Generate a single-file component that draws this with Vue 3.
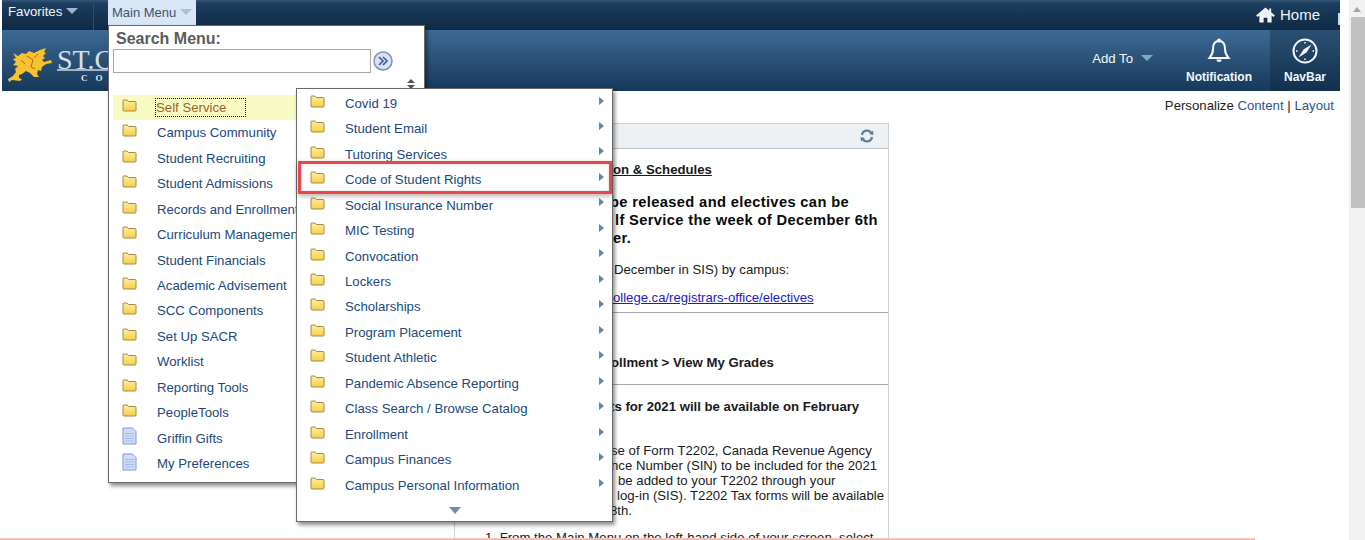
<script setup>
const mainItems = [
  ['Self Service', 'folder', true], ['Campus Community', 'folder'], ['Student Recruiting', 'folder'],
  ['Student Admissions', 'folder'], ['Records and Enrollment', 'folder'], ['Curriculum Management', 'folder'],
  ['Student Financials', 'folder'], ['Academic Advisement', 'folder'], ['SCC Components', 'folder'],
  ['Set Up SACR', 'folder'], ['Worklist', 'folder'], ['Reporting Tools', 'folder'], ['PeopleTools', 'folder'],
  ['Griffin Gifts', 'doc'], ['My Preferences', 'doc']
]
const subItems = ['Covid 19', 'Student Email', 'Tutoring Services', 'Code of Student Rights', 'Social Insurance Number',
  'MIC Testing', 'Convocation', 'Lockers', 'Scholarships', 'Program Placement', 'Student Athletic',
  'Pandemic Absence Reporting', 'Class Search / Browse Catalog', 'Enrollment', 'Campus Finances', 'Campus Personal Information']
const lines = [
  { t: 'on & Schedules', x: 158, y: 169, c: 'u b' },
  { t: 'be released and electives can be', x: 155, y: 202, c: 'big' },
  { t: 'lf Service the week of December 6th', x: 160, y: 220, c: 'big' },
  { t: 'er.', x: 158, y: 238, c: 'big' },
  { t: 'December in SIS) by campus:', x: 159, y: 269, c: '' },
  { t: 'ollege.ca/registrars-office/electives', x: 158, y: 297, c: 'link' },
  { t: 'ollment > View My Grades', x: 156, y: 362, c: 'b' },
  { t: 'ts for 2021 will be available on February', x: 155, y: 406, c: 'b' },
  { t: 'se of Form T2202, Canada Revenue Agency', x: 156, y: 450, c: '' },
  { t: 'nce Number (SIN) to be included for the 2021', x: 156, y: 465, c: '' },
  { t: 'be added to your T2202 through your', x: 163, y: 480, c: '' },
  { t: 'log-in (SIS). T2202 Tax forms will be available', x: 162, y: 495, c: '' },
  { t: '8th.', x: 155, y: 510, c: '' },
  { t: '1. From the Main Menu on the left-hand side of your screen, select', x: 30, y: 537, c: '' }
]
</script>

<template>
  <div class="page">
    <header class="hdr">
      <div class="bar1">
        <span class="fav">Favorites<i class="tri light"></i></span>
        <span class="sep"></span>
        <span class="mm">Main Menu<i class="tri pale"></i></span>
        <span class="home">
          <svg width="19" height="16" viewBox="0 0 20 17"><path d="M10 0.500 L0 9 L1.500 10.500 L3.500 9 V16.500 H8 V11.500 H12 V16.500 H16.500 V9 L18.500 10.500 L20 9 L16 5.600 V1.500 H14 V3.900 Z" fill="#eef3f7"/></svg>
          Home
        </span>
        <span class="tick"></span>
      </div>
      <div class="bar2">
        <div class="logo">
          <svg class="griffin" width="44" height="36" viewBox="0 0 44 36"><path d="M5 6 L10 9 L14 6 L18 7 L21 4 L26 6 L32 3 L38 1 L36 5 L38 6 L35 9 L37 11 L34 13 L36 15 L43 13 L44 16 L38 17 L34 20 L33 24 L30 23 L29 27 L31 30 L26 30 L22 26 L18 24 L14 27 L11 28 L11 31 L14 32 L12 34 L4 33 L1 35 L0 32 L5 29 L8 25 L7 22 L10 19 L5 18 L8 15 L5 12 L8 11 Z" fill="#f8c12f"/><path d="M19 9 L25 13 L23 20 L27 22 M13 13 L17 17 M30 7 L26 11" stroke="#9a7416" fill="none"/></svg>
          <div class="wordmark">
            <div class="st">ST.C</div>
            <div class="col">COL</div>
          </div>
        </div>
        <div class="right">
          <span class="addto">Add To<i class="tri blue"></i></span>
          <div class="tool">
            <svg width="24" height="26" viewBox="0 0 24 26" fill="none" stroke="#f4f7fa" stroke-width="2"><path d="M12 3 C7 3 6 7 6 11 C6 15 5 17 2.500 20 H21.500 C19 17 18 15 18 11 C18 7 17 3 12 3 Z"/><circle cx="12" cy="2.500" r="1" fill="#f4f7fa"/><path d="M9.500 21.500 a2.500 2.500 0 0 0 5 0" fill="#f4f7fa" stroke="none"/></svg>
            <span>Notification</span>
          </div>
          <div class="tool nav">
            <svg width="26" height="26" viewBox="0 0 26 26" fill="none" stroke="#f4f7fa" stroke-width="2"><circle cx="13" cy="13" r="11.500"/><path d="M19.500 6.500 L14.500 14.500 L11.500 11.500 Z M6.500 19.500 L11.500 11.500 L14.500 14.500 Z" fill="#f4f7fa" stroke="none"/><path d="M13 4 v1.500 M13 20.500 v1.500 M4 13 h1.500 M20.500 13 h1.500" stroke-width="1.500"/></svg>
            <span>NavBar</span>
          </div>
        </div>
      </div>
    </header>

    <div class="persona">Personalize <a>Content</a> | <a>Layout</a></div>

    <section class="panel">
      <div class="phead">
        <svg width="14" height="14" viewBox="0 0 14 14" fill="none" stroke="#5f7f9c" stroke-width="2.200"><path d="M2 6 A5 5 0 0 1 11.500 4.500"/><path d="M12 8 A5 5 0 0 1 2.500 9.500"/><path d="M9 5 L13.500 6 L13 1.500 Z M5 9 L0.500 8 L1 12.500 Z" fill="#5f7f9c" stroke="none"/></svg>
      </div>
      <div class="pbody">
        <span v-for="l in lines" :key="l.t" class="ln" :class="l.c" :style="{ left: l.x + 'px', top: (l.y - 148) + 'px' }">{{ l.t }}</span>
        <hr class="rule r1" />
        <hr class="rule r2" />
      </div>
    </section>

    <div class="pink"></div>

    <div class="menu main">
      <div class="stitle">Search Menu:</div>
      <div class="srow">
        <span class="sinput"></span>
        <svg width="20" height="20" viewBox="0 0 20 20"><circle cx="10" cy="10" r="9" fill="#d8e2f2" stroke="#7d93bd" stroke-width="1.500"/><path d="M6 6 L10 10 L6 14 M10 6 L14 10 L10 14" fill="none" stroke="#3d5f9e" stroke-width="1.700"/></svg>
      </div>
      <div class="sort"><i class="up"></i><i class="dn"></i></div>
      <ul class="list">
        <li v-for="m in mainItems" :key="m[0]" class="row" :class="{ hi: m[2] }">
          <svg v-if="m[1] === 'folder'" class="ic" width="15" height="13" viewBox="0 0 15 13"><defs><linearGradient id="fold" x1="0" y1="0" x2="0" y2="1"><stop offset="0" stop-color="#fdeea0"/><stop offset="1" stop-color="#f7d048"/></linearGradient></defs><path d="M1 3 V1.500 Q1 1 1.500 1 H5 L6.500 2.500 H13 Q14 2.500 14 3.500 V11 Q14 12 13 12 H2 Q1 12 1 11 Z" fill="url(#fold)" stroke="#a38a48"/></svg>
          <svg v-else class="ic" width="15" height="18" viewBox="0 0 15 18"><path d="M1 1 H10.500 L14 4.500 V17 H1 Z" fill="#cfdcf8" stroke="#7b9be0"/><path d="M3 6.500 H12 M3 9 H12 M3 11.500 H12 M3 14 H12" stroke="#a6bbe8"/></svg>
          <span class="lbl" :class="{ focus: m[2] }">{{ m[0] }}</span>
        </li>
      </ul>
    </div>

    <div class="menu sub">
      <ul class="list">
        <li v-for="s in subItems" :key="s" class="row">
          <svg class="ic" width="15" height="13" viewBox="0 0 15 13"><defs><linearGradient id="fold2" x1="0" y1="0" x2="0" y2="1"><stop offset="0" stop-color="#fdeea0"/><stop offset="1" stop-color="#f7d048"/></linearGradient></defs><path d="M1 3 V1.500 Q1 1 1.500 1 H5 L6.500 2.500 H13 Q14 2.500 14 3.500 V11 Q14 12 13 12 H2 Q1 12 1 11 Z" fill="url(#fold2)" stroke="#a38a48"/></svg>
          <span class="lbl">{{ s }}</span>
          <i class="arrow"></i>
        </li>
      </ul>
      <i class="more"></i>
    </div>

    <div class="callout"></div>

    <div class="sbar">
      <i class="sup"></i>
      <div class="thumb"></div>
    </div>
  </div>
</template>

<style>
html, body { margin: 0; padding: 0; background: #fff; overflow: hidden; }
</style>

<style scoped>
.page { position: relative; width: 1365px; height: 540px; overflow: hidden; background: #fff; font-family: "Liberation Sans", Arial, sans-serif; font-size: 13.200px; color: #222; }
ul { list-style: none; margin: 0; padding: 0; }
.hdr { margin-left: 2px; width: 1338px; }
.bar1 { height: 30px; display: flex; align-items: flex-start; background: linear-gradient(#36597a 0, #1c3f60 3px, #14324f 60%, #0f2a44 100%); color: #f2f5f8; box-sizing: border-box; }
.fav { margin: 4px 0 0 6px; width: 85px; flex: none; white-space: nowrap; }
.tri { display: inline-block; width: 0; height: 0; border-left: 6px solid transparent; border-right: 6px solid transparent; border-top: 6px solid #9fb4c8; margin-left: 4px; vertical-align: 2px; }
.tri.pale { border-top-color: #a9c0da; }
.tri.blue { border-top-color: #88a5bf; margin-left: 8px; }
.sep { width: 1px; height: 30px; background: #2e4d6a; flex: none; margin-right: 14px; }
.mm { background: #d8e6f6; color: #3f5570; height: 25px; line-height: 26px; padding: 0 0 0 4px; box-sizing: border-box; width: 88px; white-space: nowrap; flex: none; font-size: 13px; }
.home { margin-left: auto; margin-right: 18px; margin-top: 6px; display: flex; align-items: center; gap: 5px; font-size: 15px; color: #eef3f7; line-height: 18px; }
.tick { width: 2px; height: 12px; margin-top: 13px; background: #cfd8e0; flex: none; }
.bar2 { height: 61px; background: linear-gradient(#3c6b96 0, #2c5379 45%, #16385a 100%); display: flex; justify-content: space-between; color: #f4f7fa; }
.logo { display: flex; padding: 17px 0 0 6px; flex: none; box-sizing: border-box; }
.griffin { flex: none; }
.wordmark { margin-left: 5px; }
.st { font-family: "Liberation Serif", serif; font-size: 28px; line-height: 26px; color: #d5e0ea; border-bottom: 2px solid #9fb4c8; width: 120px; height: 22px; }
.col { font-family: "Liberation Serif", serif; font-size: 9px; font-weight: bold; letter-spacing: 8px; color: #dfe7ef; padding: 2px 0 0 24px; line-height: 11px; white-space: nowrap; }
.right { display: flex; align-items: stretch; }
.addto { margin: 21px 15px 0 0; line-height: 16px; font-size: 13.200px; white-space: nowrap; }
.tool { width: 102px; display: flex; flex-direction: column; align-items: center; padding-top: 8px; font-weight: bold; font-size: 12px; box-sizing: border-box; line-height: 16px; gap: 5px; }
.nav { width: 70px; background: linear-gradient(#2b5073, #12304d); }
.persona { position: absolute; top: 98px; right: 31px; line-height: 16px; }
.persona a { color: #27578e; }
.panel { position: absolute; left: 454px; top: 123px; width: 435px; height: 417px; box-sizing: border-box; border: 1px solid #cfcfcf; border-bottom: 0; }
.phead { height: 24px; background: #eef1f3; border-bottom: 1px solid #bcc2c8; display: flex; justify-content: flex-end; align-items: center; padding-right: 14px; }
.pbody { position: relative; height: 392px; font-size: 13.200px; }
.ln { position: absolute; white-space: nowrap; line-height: 15px; color: #1a1a1a; transform: translateY(-8px); }
.b { font-weight: bold; font-size: 13.200px; }
.u { text-decoration: underline; }
.big { font-weight: bold; font-size: 14.700px; letter-spacing: 0.350px; color: #0a0a0a; }
.link { color: #1a1ac8; text-decoration: underline; font-size: 13.100px; }
.rule { position: absolute; left: 0; right: 0; margin: 0; border: 0; height: 1px; background: #a8a8a8; }
.r1 { top: 163px; }
.r2 { top: 235px; }
.pink { position: absolute; left: 0; bottom: 0; width: 1255px; height: 2px; background: linear-gradient(#f8d3cf, #efa8a2); }
.menu { position: absolute; background: #fff; border: 1px solid #6a6a6a; box-sizing: border-box; box-shadow: 2px 3px 4px rgba(0,0,0,.45); }
.main { left: 108px; top: 25px; width: 317px; height: 458px; padding-left: 4px; }
.stitle { font-size: 16px; font-weight: bold; color: #5c5c5c; line-height: 18px; margin: 4px 0 0 3px; }
.srow { display: flex; align-items: center; gap: 2px; margin-top: 1px; }
.sinput { width: 258px; height: 24px; box-sizing: border-box; border: 1px solid #a8a8a8; background: #fff; }
.sort { position: absolute; left: 298px; top: 53px; display: flex; flex-direction: column; gap: 2px; }
.up, .dn { display: block; width: 0; height: 0; border-left: 4px solid transparent; border-right: 4px solid transparent; }
.up { border-bottom: 4px solid #555; }
.dn { border-top: 4px solid #555; }
.main .list { margin-top: 21.500px; }
.row { height: 25.470px; display: flex; align-items: center; color: #20497c; position: relative; }
.ic { flex: none; position: relative; top: -2px; }
.main .row { padding-left: 9px; }
.main .lbl { margin-left: 20px; }
.hi { background: #f9fbc4; color: #a0622a; margin-right: 128px; }
.main .hi .lbl { margin-left: 19px; }
.focus { outline: 1px dotted #111; width: 89px; line-height: 17px; }
.sub { left: 296px; top: 88px; width: 317px; height: 434px; z-index: 2; padding-top: 1.500px; }
.sub .row { padding-left: 13px; }
.sub .lbl { margin-left: 20px; }
.arrow { position: absolute; right: 8px; top: 6px; width: 0; height: 0; border-top: 4.500px solid transparent; border-bottom: 4.500px solid transparent; border-left: 5px solid #5a87b5; }
.more { position: absolute; left: 152px; bottom: 7px; width: 0; height: 0; border-left: 6px solid transparent; border-right: 6px solid transparent; border-top: 7px solid #6f8fa8; }
.callout { position: absolute; left: 298px; top: 161px; width: 314px; height: 33px; box-sizing: border-box; border: 3px solid #e8474c; z-index: 3; box-shadow: 0 2px 5px rgba(0,0,0,.3), inset 0 0 3px rgba(0,0,0,.18); }
.sbar { position: absolute; right: 0; top: 0; width: 16px; height: 540px; background: #f1f1f1; }
.sup { position: absolute; left: 4px; top: 7px; width: 0; height: 0; border-left: 4.500px solid transparent; border-right: 4.500px solid transparent; border-bottom: 5px solid #a3a3a3; }
.thumb { position: absolute; left: 2px; top: 17px; width: 14px; height: 191px; background: #c1c1c1; }
</style>
